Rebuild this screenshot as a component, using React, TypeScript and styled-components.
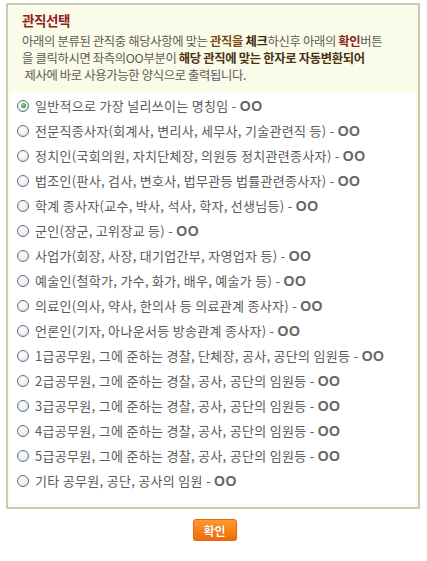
import React, { useState } from "react";
import styled, { createGlobalStyle } from "styled-components";

const Global = createGlobalStyle`
  html, body { margin: 0; padding: 0; background: #ffffff; }
  body { font-family: "Noto Sans CJK KR", "Noto Sans", sans-serif; }
`;

const Page = styled.div`
  padding: 3px 7px 0 6px;
  display: flex;
  flex-direction: column;
  align-items: stretch;
`;

const Box = styled.div`
  border: 2px solid #c9cab4;
  border-radius: 2px;
  background: #fbfbe9;
  box-shadow: 0 0 1px #e0e0cc;
`;

const Header = styled.div`
  padding: 6px 4px 8px 14px;
`;

const Title = styled.div`
  font-size: 13.5px;
  line-height: 18px;
  font-weight: bold;
  color: #8e2222;
  letter-spacing: -0.4px;
  margin-bottom: 4px;
`;

const Desc = styled.div`
  font-size: 12.3px;
  line-height: 17px;
  height: 17px;
  color: #5a5a5a;
  letter-spacing: -0.32px;
  white-space: pre;
`;

const Em = styled.b<{ $c: string }>`
  color: ${(p) => p.$c};
  font-weight: bold;
`;

const List = styled.div`
  margin: 0 2px 3px 2px;
  background: #ffffff;
  padding: 1px 0 11px 0;
  display: flex;
  flex-direction: column;
`;

const Row = styled.label`
  height: 25px;
  display: flex;
  align-items: center;
  padding-left: 7px;
  gap: 6px;
  cursor: pointer;
`;

const Radio = styled.input`
  appearance: none;
  margin: 0;
  width: 12px;
  height: 12px;
  border-radius: 50%;
  border: 1px solid #5f6e7e;
  background: radial-gradient(circle at 40% 35%, #ffffff 0%, #eef0f2 55%, #c9ced4 100%);
  display: grid;
  place-items: center;
  flex: none;
  &:checked::after {
    content: "";
    width: 5px;
    height: 5px;
    border-radius: 50%;
    background: radial-gradient(circle at 40% 35%, #8fe08f 0%, #2e9a2e 70%);
  }
`;

const Text = styled.span`
  font-size: 13px;
  color: #5a5a5a;
  letter-spacing: 0.3px;
  white-space: nowrap;
`;

const OO = styled.span`
  font-family: "Liberation Sans", Arial, sans-serif;
  font-size: 14px;
  font-weight: bold;
  color: #666666;
  letter-spacing: 0.5px;
`;

const Footer = styled.div`
  display: flex;
  justify-content: center;
  padding-top: 10px;
  padding-left: 3px;
`;

const Button = styled.button`
  width: 44px;
  height: 22px;
  border: 1px solid #e06a12;
  border-radius: 3px;
  background: linear-gradient(#ff9a30, #f26a06);
  color: #ffffff;
  font-family: "Noto Sans CJK KR", sans-serif;
  font-size: 12px;
  font-weight: bold;
  padding: 0;
  text-shadow: 0 0 1px #c05000;
  box-shadow: 0 1px 1px #d8b090;
  cursor: pointer;
`;

const items = [
  "일반적으로 가장 널리쓰이는 명칭임",
  "전문직종사자(회계사, 변리사, 세무사, 기술관련직 등)",
  "정치인(국회의원, 자치단체장, 의원등 정치관련종사자)",
  "법조인(판사, 검사, 변호사, 법무관등 법률관련종사자)",
  "학계 종사자(교수, 박사, 석사, 학자, 선생님등)",
  "군인(장군, 고위장교 등)",
  "사업가(회장, 사장, 대기업간부, 자영업자 등)",
  "예술인(철학가, 가수, 화가, 배우, 예술가 등)",
  "의료인(의사, 약사, 한의사 등 의료관계 종사자)",
  "언론인(기자, 아나운서등 방송관계 종사자)",
  "1급공무원, 그에 준하는 경찰, 단체장, 공사, 공단의 임원등",
  "2급공무원, 그에 준하는 경찰, 공사, 공단의 임원등",
  "3급공무원, 그에 준하는 경찰, 공사, 공단의 임원등",
  "4급공무원, 그에 준하는 경찰, 공사, 공단의 임원등",
  "5급공무원, 그에 준하는 경찰, 공사, 공단의 임원등",
  "기타 공무원, 공단, 공사의 임원",
];

export default function App() {
  const [sel, setSel] = useState(0);
  return (
    <>
      <Global />
      <Page>
        <Box>
          <Header>
            <Title>관직선택</Title>
            <Desc>
              아래의 분류된 관직중 해당사항에 맞는 <Em $c="#7b4a1c">관직을</Em>{" "}
              <Em $c="#3e2a14">체크</Em>하신후 아래의 <Em $c="#8e2222">확인</Em>버튼
            </Desc>
            <Desc>
              을 클릭하시면 좌측의OO부분이{" "}
              <Em $c="#4a3212">해당 관직에 맞는 한자로 자동변환되어</Em>
            </Desc>
            <Desc> 제사에 바로 사용가능한 양식으로 출력됩니다.</Desc>
          </Header>
          <List>
            {items.map((t, i) => (
              <Row key={i}>
                <Radio
                  type="radio"
                  name="gwanjik"
                  checked={sel === i}
                  onChange={() => setSel(i)}
                />
                <Text>
                  {t} - <OO>OO</OO>
                </Text>
              </Row>
            ))}
          </List>
        </Box>
        <Footer>
          <Button type="button">확인</Button>
        </Footer>
      </Page>
    </>
  );
}
